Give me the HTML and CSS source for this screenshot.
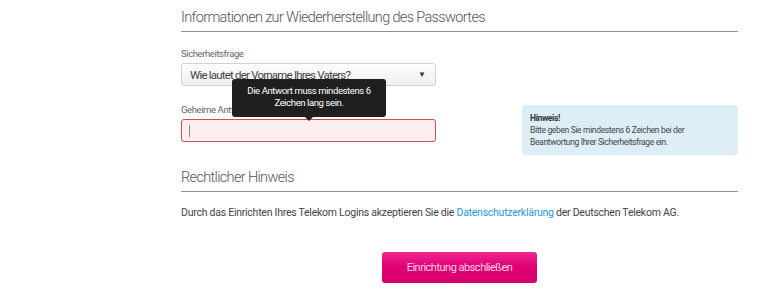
FILE: index.html
```html
<!DOCTYPE html>
<html lang="de">
<head>
    <meta charset="UTF-8">
    <title>Telekom Login einrichten</title>
    <link rel="stylesheet" href="styles.css">
</head>
<body>
    <div class="page">
        <h2 class="section-title">Informationen zur Wiederherstellung des Passwortes</h2>

        <div class="form-row">
            <div class="form-fields">
                <label class="field-label">Sicherheitsfrage</label>
                <div class="select-box">
                    <span>Wie lautet der Vorname Ihres Vaters?</span>
                    <span class="select-arrow">&#9660;</span>
                </div>

                <div class="answer-group">
                    <label class="field-label">Geheime Antwort</label>
                    <div class="text-input error"><span class="caret"></span></div>
                    <div class="tooltip">Die Antwort muss mindestens 6<br>Zeichen lang sein.</div>
                </div>
            </div>

            <div class="hint-box">
                <strong>Hinweis!</strong><br>
                Bitte geben Sie mindestens 6 Zeichen bei der Beantwortung Ihrer Sicherheitsfrage ein.
            </div>
        </div>

        <h2 class="section-title legal-title">Rechtlicher Hinweis</h2>
        <p class="legal-text">Durch das Einrichten Ihres Telekom Logins akzeptieren Sie die <a href="#">Datenschutzerklärung</a> der Deutschen Telekom AG.</p>

        <div class="actions">
            <button class="submit-btn">Einrichtung abschließen</button>
        </div>
    </div>
</body>
</html>
```

FILE: styles.css
```css
body {
    margin: 0;
    background-color: #fff;
    font-family: Roboto, 'Liberation Sans', Arial, sans-serif;
    color: #333;
}
.page {
    width: 557px;
    margin-left: 181px;
    padding-top: 8px;
}
.section-title {
    margin: 0;
    font-size: 14.5px;
    font-weight: 300;
    letter-spacing: -0.65px;
    color: #555;
    line-height: 20px;
    padding-bottom: 3px;
    border-bottom: 1px solid #8f8f8f;
}
.form-row {
    display: flex;
    justify-content: space-between;
    padding-top: 15px;
}
.form-fields {
    width: 255px;
}
.field-label {
    display: block;
    font-size: 9.5px;
    letter-spacing: -0.4px;
    color: #666;
    line-height: 13px;
    margin-bottom: 3px;
}
.select-box {
    height: 21px;
    border: 1px solid #d2d2d2;
    border-radius: 3px;
    background: linear-gradient(#fdfdfd, #efefef);
    display: flex;
    justify-content: space-between;
    align-items: center;
    padding: 0 10px 0 8px;
    font-size: 11.5px;
    letter-spacing: -0.8px;
    color: #444;
}
.select-arrow {
    font-size: 8px;
    color: #333;
}
.answer-group {
    position: relative;
    padding-top: 17px;
}
.text-input {
    height: 21px;
    border: 1px solid #ccc;
    border-radius: 3px;
    display: flex;
    align-items: center;
    padding-left: 7px;
}
.text-input.error {
    border-color: #e0484f;
    background-color: #fcefef;
}
.caret {
    width: 1px;
    height: 12px;
    background-color: #888;
}
.tooltip {
    position: absolute;
    left: 51px;
    top: -7px;
    width: 154px;
    height: 38px;
    box-sizing: border-box;
    padding-top: 6px;
    background-color: #1f1f1f;
    border-radius: 3px;
    color: #fff;
    font-size: 9.5px;
    letter-spacing: -0.4px;
    line-height: 12px;
    text-align: center;
}
.tooltip::after {
    content: '';
    position: absolute;
    left: 73px;
    bottom: -4px;
    border-left: 4px solid transparent;
    border-right: 4px solid transparent;
    border-top: 4px solid #1f1f1f;
}
.hint-box {
    width: 216px;
    box-sizing: border-box;
    height: 50px;
    margin-top: 58px;
    padding: 7px 24px 7px 8px;
    background-color: #ddeef8;
    border-radius: 3px;
    font-size: 8.5px;
    letter-spacing: -0.35px;
    line-height: 12px;
    color: #444;
}
.hint-box strong {
    color: #333;
}
.legal-title {
    margin-top: 13px;
}
.legal-text {
    margin: 14px 0 0;
    font-size: 10.5px;
    letter-spacing: -0.25px;
    line-height: 14px;
    color: #444;
}
.legal-text a {
    color: #1e9bd7;
    text-decoration: none;
}
.actions {
    display: flex;
    justify-content: center;
    padding-top: 32px;
}
.submit-btn {
    width: 155px;
    height: 31px;
    border: none;
    border-radius: 3px;
    background: linear-gradient(#ef2a92, #e20074 45%, #d4006c);
    color: #fbd3e8;
    font-family: Roboto, 'Liberation Sans', Arial, sans-serif;
    font-size: 11px;
    letter-spacing: -0.5px;
    cursor: pointer;
}
```
